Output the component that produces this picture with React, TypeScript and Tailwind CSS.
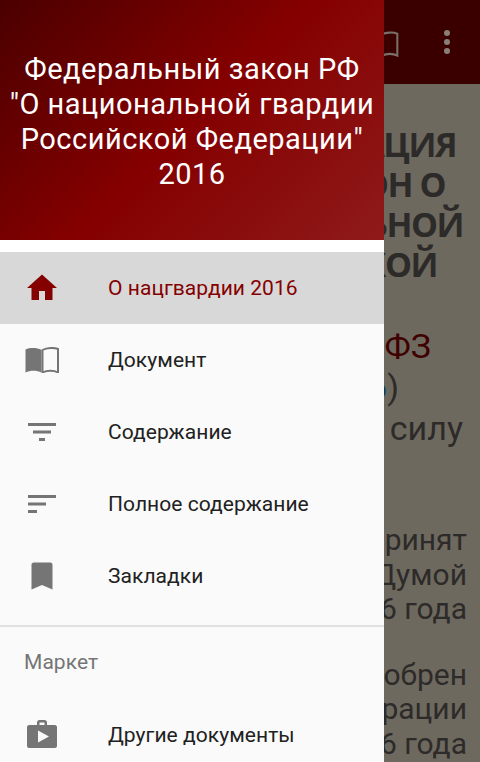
import React from "react";

function Home() {
  return (
    <svg viewBox="0 0 24 24" className="w-[36px] h-[36px]" fill="#850000">
      <path d="M10 20v-6h4v6h5v-8h3L12 3 2 12h3v8z" />
    </svg>
  );
}
function Book() {
  return (
    <svg viewBox="0 0 34 26" className="w-[34px] h-[26px]" fill="none">
      <path d="M0.5 2.5C5 0.5 12 0.5 16.5 3V25.5C12 23 5 23 0.5 25.5Z" fill="#757575" />
      <path d="M17.5 3C22 0.5 29 0.5 33 2V25.5C29 23 22 23 17.5 25.5Z" stroke="#757575" strokeWidth="2" fill="none" />
    </svg>
  );
}
function Filter() {
  return (
    <svg viewBox="0 0 28 18" className="w-[28px] h-[18px]" fill="#757575">
      <rect x="0" y="0" width="28" height="3" />
      <rect x="5" y="7.5" width="18" height="3" />
      <rect x="11" y="15" width="6" height="3" />
    </svg>
  );
}
function Sort() {
  return (
    <svg viewBox="0 0 28 18" className="w-[28px] h-[18px]" fill="#757575">
      <rect x="0" y="0" width="28" height="3" />
      <rect x="0" y="7.5" width="18" height="3" />
      <rect x="0" y="15" width="9" height="3" />
    </svg>
  );
}
function Bookmark() {
  return (
    <svg viewBox="0 0 22 28" className="w-[22px] h-[28px]" fill="#757575">
      <path d="M2.5 0.5H19.5C20.5 0.5 21.5 1.5 21.5 2.5V27.5L11 23L0.5 27.5V2.5C0.5 1.5 1.5 0.5 2.5 0.5Z" />
    </svg>
  );
}
function Shop() {
  return (
    <svg viewBox="0 0 30 30" className="w-[30px] h-[30px] mt-[-2px]">
      <path
        fill="#757575"
        d="M10 6V3.5C10 2 11.2 1 12.5 1h5C18.8 1 20 2 20 3.5V6h8c1 0 2 1 2 2v19c0 1-1 2-2 2H2c-1 0-2-1-2-2V8c0-1 1-2 2-2zm2.5 0h5V3.5h-5z"
      />
      <path fill="#fafafa" d="M11 11.5v12l11-6z" />
    </svg>
  );
}

function Item({ icon, label, active }: { icon: React.ReactNode; label: string; active?: boolean }) {
  return (
    <div className={`h-[72px] shrink-0 flex items-center ${active ? "bg-[#d8d8d8]" : ""}`}>
      <div className="w-[84px] flex justify-center shrink-0">{icon}</div>
      <div className="w-[24px] shrink-0" />
      <span className={`text-[21px] pt-[2px] tracking-[0.05px] ${active ? "text-[#850000]" : "text-[#212121]"}`}>{label}</span>
    </div>
  );
}

export default function App() {
  return (
    <div className="relative w-[480px] h-[762px] overflow-hidden bg-[#6e695f] font-['Roboto',sans-serif]">
      <div className="h-[84px] bg-[#3a0000] flex items-center justify-end">
        <svg viewBox="0 0 36 28" className="w-[36px] h-[26px] mr-[44px] mt-[3px]" fill="none">
          <path d="M18 3.5C22 1.5 30 1 34.5 3V26.5C30 24 23 24 18 26.5Z" stroke="#7b6f6a" strokeWidth="2.2" />
        </svg>
        <div className="flex flex-col gap-[3px] mr-[30px]">
          <div className="w-[6px] h-[6px] rounded-full bg-[#8a7f78]" />
          <div className="w-[6px] h-[6px] rounded-full bg-[#8a7f78]" />
          <div className="w-[6px] h-[6px] rounded-full bg-[#8a7f78]" />
        </div>
      </div>

      <div className="pt-[40px] text-[#2d2b29]">
        <div className="font-['Open_Sans',sans-serif] font-bold text-[34px] leading-[40px] whitespace-nowrap tracking-[-1.5px]">
          <div className="text-right pr-[24px]">ФЕДЕРАЦИЯ</div>
          <div className="text-right pr-[35px]">ЗАКОН О</div>
          <div className="text-right pr-[17px]">НАЦИОНАЛЬНОЙ</div>
          <div className="text-right pr-[43px]">РОССИЙСКОЙ</div>
        </div>
        <div className="mt-[42px] text-[34px] leading-[41px] whitespace-nowrap">
          <div className="text-right pr-[49px] text-[#3f0000]">№ 226 ФЗ</div>
          <div className="text-right pr-[81px]">
            <span className="text-[#0b3b66]">2016</span>)
          </div>
          <div className="text-right pr-[17px]">вступает в силу</div>
        </div>
        <div className="mt-[74px] text-[30px] leading-[34.5px] whitespace-nowrap">
          <div className="text-right pr-[13px]">Принят</div>
          <div className="text-right pr-[13px]">Думой</div>
          <div className="text-right pr-[13px]">2016 года</div>
          <div className="text-right pr-[13px] mt-[31px]">Одобрен</div>
          <div className="text-right pr-[13px]">Федерации</div>
          <div className="text-right pr-[13px]">2016 года</div>
        </div>
      </div>

      <div className="absolute left-0 top-0 w-[384px] h-[762px] bg-[#fafafa] flex flex-col overflow-hidden">
        <div className="h-[240px] shrink-0 flex items-center justify-center text-center bg-[linear-gradient(135deg,#4a0000_0%,#850000_50%,#8f1a1a_100%)] text-white text-[29px] leading-[35px] tracking-[0.5px] whitespace-nowrap">
          <div className="mt-[3px]">
            Федеральный закон РФ
            <br />
            "О национальной гвардии
            <br />
            Российской Федерации"
            <br />
            2016
          </div>
        </div>
        <div className="h-[12px] shrink-0 bg-white" />
        <Item icon={<Home />} label="О нацгвардии 2016" active />
        <Item icon={<Book />} label="Документ" />
        <Item icon={<Filter />} label="Содержание" />
        <Item icon={<Sort />} label="Полное содержание" />
        <Item icon={<Bookmark />} label="Закладки" />
        <div className="h-[2px] bg-[#e0e0e0] shrink-0 mt-[13px]" />
        <div className="h-[72px] shrink-0 flex items-center pl-[24px] text-[#757575] text-[21px] tracking-[0.05px]">Маркет</div>
        <Item icon={<Shop />} label="Другие документы" />
      </div>
    </div>
  );
}
